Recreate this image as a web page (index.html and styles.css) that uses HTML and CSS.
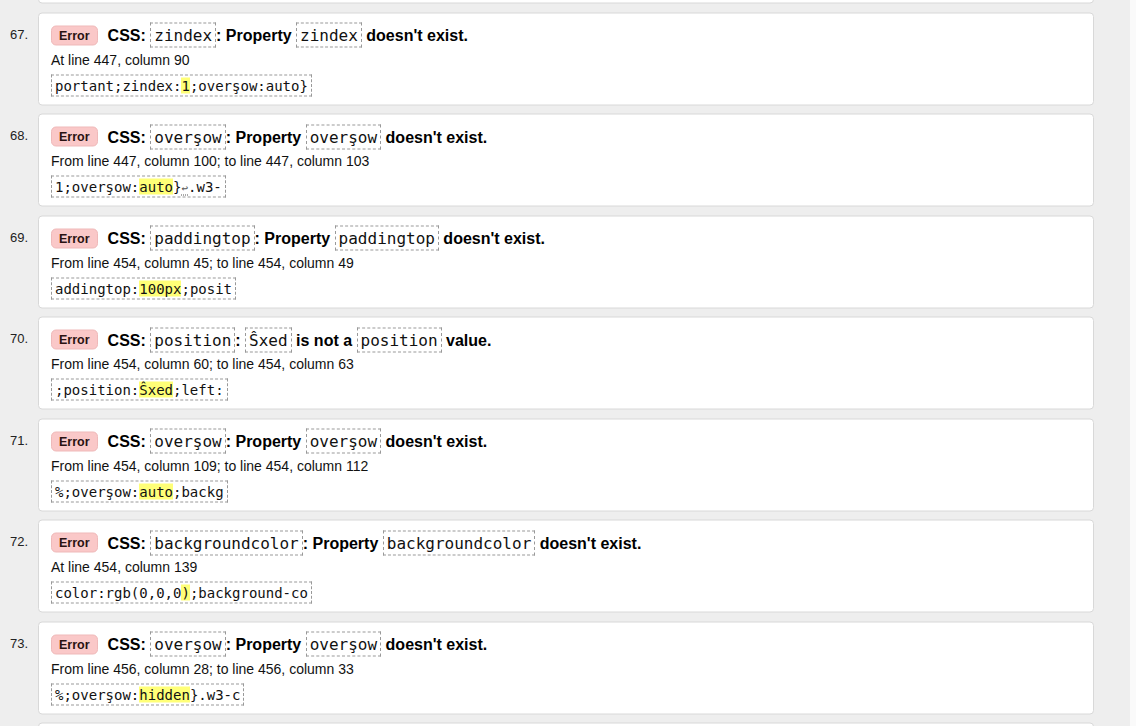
FILE: index.html
```html
<!DOCTYPE html>
<html>
<head>
<meta charset="utf-8">
<link rel="stylesheet" href="styles.css">
</head>
<body>
<div class="page">
  <ol class="msgs">
    <li class="item"><span class="num">66.</span><div class="card">
      <div class="title"><span class="badge">Error</span><span class="t">CSS: <code class="c">zindex</code>: Property <code class="c">zindex</code> doesn't exist.</span></div>
      <p class="loc">At line 446, column 12</p>
      <p class="ext"><code class="x">relative;zindex:<span class="hl">1</span>}</code></p>
    </div></li>
    <li class="item"><span class="num">67.</span><div class="card">
      <div class="title"><span class="badge">Error</span><span class="t">CSS: <code class="c">zindex</code>: Property <code class="c">zindex</code> doesn't exist.</span></div>
      <p class="loc">At line 447, column 90</p>
      <p class="ext"><code class="x">portant;zindex:<span class="hl">1</span>;overşow:auto}</code></p>
    </div></li>
    <li class="item"><span class="num">68.</span><div class="card">
      <div class="title"><span class="badge">Error</span><span class="t">CSS: <code class="c">overşow</code>: Property <code class="c">overşow</code> doesn't exist.</span></div>
      <p class="loc">From line 447, column 100; to line 447, column 103</p>
      <p class="ext"><code class="x">1;overşow:<span class="hl">auto</span>}<span class="lf">↩</span>.w3-</code></p>
    </div></li>
    <li class="item"><span class="num">69.</span><div class="card">
      <div class="title"><span class="badge">Error</span><span class="t">CSS: <code class="c">paddingtop</code>: Property <code class="c">paddingtop</code> doesn't exist.</span></div>
      <p class="loc">From line 454, column 45; to line 454, column 49</p>
      <p class="ext"><code class="x">addingtop:<span class="hl">100px</span>;posit</code></p>
    </div></li>
    <li class="item"><span class="num">70.</span><div class="card">
      <div class="title"><span class="badge">Error</span><span class="t">CSS: <code class="c">position</code>: <code class="c">Ŝxed</code> is not a <code class="c">position</code> value.</span></div>
      <p class="loc">From line 454, column 60; to line 454, column 63</p>
      <p class="ext"><code class="x">;position:<span class="hl">Ŝxed</span>;left:</code></p>
    </div></li>
    <li class="item"><span class="num">71.</span><div class="card">
      <div class="title"><span class="badge">Error</span><span class="t">CSS: <code class="c">overşow</code>: Property <code class="c">overşow</code> doesn't exist.</span></div>
      <p class="loc">From line 454, column 109; to line 454, column 112</p>
      <p class="ext"><code class="x">%;overşow:<span class="hl">auto</span>;backg</code></p>
    </div></li>
    <li class="item"><span class="num">72.</span><div class="card">
      <div class="title"><span class="badge">Error</span><span class="t">CSS: <code class="c">backgroundcolor</code>: Property <code class="c">backgroundcolor</code> doesn't exist.</span></div>
      <p class="loc">At line 454, column 139</p>
      <p class="ext"><code class="x">color:rgb(0,0,0<span class="hl">)</span>;background-co</code></p>
    </div></li>
    <li class="item"><span class="num">73.</span><div class="card">
      <div class="title"><span class="badge">Error</span><span class="t">CSS: <code class="c">overşow</code>: Property <code class="c">overşow</code> doesn't exist.</span></div>
      <p class="loc">From line 456, column 28; to line 456, column 33</p>
      <p class="ext"><code class="x">%;overşow:<span class="hl">hidden</span>}.w3-c</code></p>
    </div></li>
    <li class="item"><span class="num">74.</span><div class="card">
      <div class="title"><span class="badge">Error</span><span class="t">CSS: <code class="c">overşow</code>: Property <code class="c">overşow</code> doesn't exist.</span></div>
      <p class="loc">From line 456, column 60; to line 456, column 65</p>
      <p class="ext"><code class="x">%;overşow:<span class="hl">hidden</span>}.w3-c</code></p>
    </div></li>
  </ol>
</div>
</body>
</html>
```
FILE: styles.css
```css
html { background: #fafafa; }
body {
  margin: 0;
  font-family: "Liberation Sans", Arial, sans-serif;
  color: #000;
}
.page {
  width: 1130px;
  height: 726px;
  overflow: hidden;
  background: #eeeeee;
}
.msgs {
  list-style: none;
  margin: 0;
  padding: 0;
  transform: translateY(-89.5px);
}
.item {
  display: flex;
  align-items: flex-start;
  margin-bottom: 8.5px;
}
.num {
  width: 38px;
  flex: none;
  box-sizing: border-box;
  padding: 13px 0 0 10px;
  font-size: 13px;
  line-height: 17px;
  color: #222;
}
.card {
  width: 1056px;
  box-sizing: border-box;
  height: 93px;
  background: #fff;
  border: 1px solid #d8d8d8;
  border-radius: 4px;
  padding: 9px 12px 0 12px;
}
.title {
  display: flex;
  align-items: center;
  height: 26px;
}
.badge {
  display: inline-block;
  background: #fac8c8;
  border: 1px solid #efb9b9;
  border-radius: 5px;
  padding: 2px 7px;
  font-size: 12.5px;
  font-weight: bold;
  color: #2a1212;
  line-height: 14px;
  margin-right: 10px;
}
.t {
  font-size: 16px;
  font-weight: bold;
}
.c {
  font-family: "DejaVu Sans Mono", monospace;
  font-weight: normal;
  font-size: 16px;
  border: 1px dashed #999;
  padding: 2px 3px;
  color: #111;
}
.loc {
  margin: 3px 0 0;
  font-size: 14px;
  line-height: 17px;
  color: #111;
}
.ext {
  margin: 5px 0 0;
  line-height: 24px;
}
.x {
  font-family: "DejaVu Sans Mono", monospace;
  font-size: 14px;
  border: 1px dashed #999;
  padding: 2px 3px;
  color: #111;
}
.hl {
  background: #ffff77;
}
.lf {
  font-size: 11px;
  color: #555;
  border-bottom: 1px dotted #555;
}
```
